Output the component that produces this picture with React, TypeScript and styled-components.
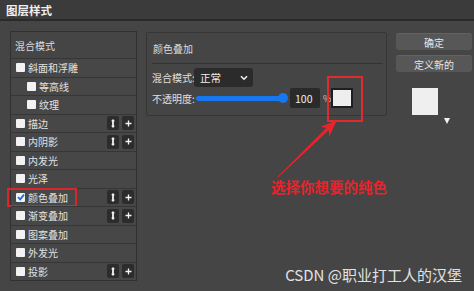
import React from 'react';
import styled, { createGlobalStyle } from 'styled-components';

const GlobalStyle = createGlobalStyle`
  html, body {
    margin: 0;
    padding: 0;
    background: #454545;
  }
  * {
    box-sizing: border-box;
  }
`;

const Window = styled.div`
  background: #454545;
  color: #dcdcdc;
  display: flex;
  flex-direction: column;
  font-family: "Noto Sans CJK SC", "Noto Sans", sans-serif;
  font-size: 10px;
  height: 291px;
  overflow: hidden;
  position: relative;
  width: 474px;
`;

const TitleBar = styled.div`
  align-items: center;
  background: #3b3b3b;
  border-bottom: 2px solid #2a2a2a;
  color: #f0f0f0;
  display: flex;
  flex-shrink: 0;
  font-size: 11.5px;
  font-weight: bold;
  height: 21px;
  padding-left: 6px;
`;

const Body = styled.div`
  display: flex;
  padding: 10px 0 0 10px;
`;

const LeftPanel = styled.div`
  border: 1px solid #313131;
  display: flex;
  flex-direction: column;
  width: 127px;
`;

const PanelHeader = styled.div`
  align-items: center;
  display: flex;
  height: 26px;
  padding-left: 4px;
`;

const Row = styled.div<{ $sub?: boolean }>`
  align-items: center;
  background: #474747;
  border-top: 1px solid #363636;
  display: flex;
  height: 18.5px;
  padding: 0 2px 0 ${(p) => (p.$sub ? 16 : 5)}px;
  position: relative;
`;

const Check = styled.span`
  align-items: center;
  background: #f2f2f2;
  border-radius: 1px;
  display: flex;
  flex-shrink: 0;
  height: 9px;
  justify-content: center;
  margin-right: 3px;
  width: 9px;
`;

const RowLabel = styled.span`
  color: #e2e2e2;
  flex: 1;
  white-space: nowrap;
`;

const MiniButtons = styled.div`
  display: flex;
  gap: 3px;
`;

const MiniButton = styled.span`
  align-items: center;
  background: #2c2c2c;
  border-radius: 2px;
  display: flex;
  height: 14px;
  justify-content: center;
  width: 12px;
`;

const RowMark = styled.span`
  border: 2px solid #d8262d;
  height: 19px;
  left: -4px;
  position: absolute;
  top: -1px;
  width: 70px;
`;

const Middle = styled.div`
  display: flex;
  flex-direction: column;
  margin-left: 9px;
  position: relative;
  width: 241px;
`;

const GroupBox = styled.div`
  border: 1px solid #363636;
  border-radius: 2px;
  display: flex;
  flex-direction: column;
  height: 84px;
  margin-top: 1px;
`;

const GroupTitle = styled.div`
  align-items: center;
  border-bottom: 1px solid #333;
  display: flex;
  height: 31px;
  margin: 0 3px 0 5px;
  padding-left: 1px;
`;

const Field = styled.div<{ $top: number; $height: number }>`
  align-items: center;
  display: flex;
  height: ${(p) => p.$height}px;
  margin-top: ${(p) => p.$top}px;
  padding-left: 5px;
`;

const FieldLabel = styled.span<{ $w: number }>`
  color: #e0e0e0;
  width: ${(p) => p.$w}px;
  white-space: nowrap;
`;

const Select = styled.div`
  align-items: center;
  background: #2b2b2b;
  border-radius: 3px;
  color: #f0f0f0;
  display: flex;
  font-size: 10.5px;
  height: 19px;
  justify-content: space-between;
  padding: 0 5px 0 6px;
  width: 59px;
`;

const SliderTrack = styled.div`
  align-items: center;
  display: flex;
  height: 10px;
  width: 92px;
`;

const SliderFill = styled.div`
  background: #1677f0;
  border-radius: 3px;
  height: 5px;
  width: 87px;
`;

const SliderKnob = styled.div`
  background: #1677f0;
  border-radius: 50%;
  height: 10px;
  margin-left: -5px;
  width: 10px;
`;

const NumberBox = styled.div`
  align-items: center;
  background: #2a2a2a;
  border-radius: 2px;
  color: #f0f0f0;
  display: flex;
  font-size: 10.5px;
  height: 20px;
  margin-left: 2px;
  padding-left: 5px;
  width: 30px;
`;

const Percent = styled.span`
  color: #cfcfcf;
  font-size: 9px;
  margin-left: 3px;
  width: 8px;
`;

const Swatch = styled.div`
  background: #eeeeee;
  border: 2px solid #1f1f1f;
  height: 20px;
  width: 22px;
`;

const SwatchMark = styled.span`
  border: 2px solid #df2a30;
  height: 46px;
  left: 181px;
  position: absolute;
  top: 45px;
  width: 36px;
`;

const Arrow = styled.svg`
  left: 128px;
  position: absolute;
  top: 84px;
`;

const Note = styled.div`
  color: #e8232b;
  font-size: 14.5px;
  font-weight: bold;
  line-height: 18px;
  margin-top: 62px;
  padding-left: 125px;
  white-space: nowrap;
`;

const RightColumn = styled.div`
  display: flex;
  flex-direction: column;
  gap: 5px;
  margin-left: 9px;
  padding-top: 2px;
  width: 76px;
`;

const DialogButton = styled.div`
  align-items: center;
  background: #575757;
  border-radius: 3px;
  border-top: 1px solid #626262;
  color: #e8e8e8;
  display: flex;
  height: 17px;
  justify-content: center;
`;

const Preview = styled.div`
  background: #efefef;
  height: 27px;
  margin: 11px 0 0 16px;
  width: 26px;
`;

const Caret = styled.span`
  border-left: 3.5px solid transparent;
  border-right: 3.5px solid transparent;
  border-top: 6px solid #f2f2f2;
  height: 0;
  margin: -2px 0 0 48px;
  width: 0;
`;

const Watermark = styled.div`
  bottom: 6px;
  color: #e2e2e2;
  font-size: 15px;
  position: absolute;
  right: 12px;
  white-space: nowrap;
`;

const MoveIcon = () => (
  <svg width="4" height="9" viewBox="0 0 4 9">
    <path d="M2 0 L4 2.2 L0 2.2 Z M2 9 L4 6.8 L0 6.8 Z" fill="#f4f4f4" />
    <rect x="1.1" y="2" width="1.8" height="5" fill="#f4f4f4" />
  </svg>
);

const PlusIcon = () => (
  <svg width="7" height="7" viewBox="0 0 7 7">
    <path d="M3.5 0.5 V6.5 M0.5 3.5 H6.5" stroke="#f4f4f4" strokeWidth="1.3" />
  </svg>
);

const Tick = () => (
  <svg width="8" height="8" viewBox="0 0 8 8">
    <path d="M1 4.2 L3.2 6.4 L7 1.6" fill="none" stroke="#1a6fe0" strokeWidth="1.8" />
  </svg>
);

const Chevron = () => (
  <svg width="8" height="6" viewBox="0 0 8 6">
    <path d="M1 1.2 L4 4.2 L7 1.2" fill="none" stroke="#f0f0f0" strokeWidth="1.6" />
  </svg>
);

interface StyleRow {
  label: string;
  sub?: boolean;
  buttons?: boolean;
  checked?: boolean;
  marked?: boolean;
}

const rows: StyleRow[] = [
  { label: '斜面和浮雕' },
  { label: '等高线', sub: true },
  { label: '纹理', sub: true },
  { label: '描边', buttons: true },
  { label: '内阴影', buttons: true },
  { label: '内发光' },
  { label: '光泽' },
  { label: '颜色叠加', buttons: true, checked: true, marked: true },
  { label: '渐变叠加', buttons: true },
  { label: '图案叠加' },
  { label: '外发光' },
  { label: '投影', buttons: true },
];

export default function App() {
  return (
    <Window>
      <GlobalStyle />
      <TitleBar>图层样式</TitleBar>
      <Body>
        <LeftPanel>
          <PanelHeader>混合模式</PanelHeader>
          {rows.map((r) => (
            <Row key={r.label} $sub={r.sub}>
              <Check>{r.checked && <Tick />}</Check>
              <RowLabel>{r.label}</RowLabel>
              {r.buttons && (
                <MiniButtons>
                  <MiniButton><MoveIcon /></MiniButton>
                  <MiniButton><PlusIcon /></MiniButton>
                </MiniButtons>
              )}
              {r.marked && <RowMark />}
            </Row>
          ))}
        </LeftPanel>

        <Middle>
          <GroupBox>
            <GroupTitle>颜色叠加</GroupTitle>
            <Field $top={4} $height={19}>
              <FieldLabel $w={42}>混合模式:</FieldLabel>
              <Select>
                正常
                <Chevron />
              </Select>
            </Field>
            <Field $top={1} $height={20}>
              <FieldLabel $w={44}>不透明度:</FieldLabel>
              <SliderTrack>
                <SliderFill />
                <SliderKnob />
              </SliderTrack>
              <NumberBox>100</NumberBox>
              <Percent>%</Percent>
              <Swatch />
            </Field>
          </GroupBox>
          <SwatchMark />
          <Arrow width="68" height="66" viewBox="0 0 68 66">
            <polygon
              points="63,5 46.3,12.1 52.5,12.8 3.7,61.7 4.3,62.3 54.7,15.2 55.3,21.5"
              fill="#e8232b"
            />
          </Arrow>
          <Note>选择你想要的纯色</Note>
        </Middle>

        <RightColumn>
          <DialogButton>确定</DialogButton>
          <DialogButton>定义新的</DialogButton>
          <Preview />
          <Caret />
        </RightColumn>
      </Body>
      <Watermark>CSDN @职业打工人的汉堡</Watermark>
    </Window>
  );
}
